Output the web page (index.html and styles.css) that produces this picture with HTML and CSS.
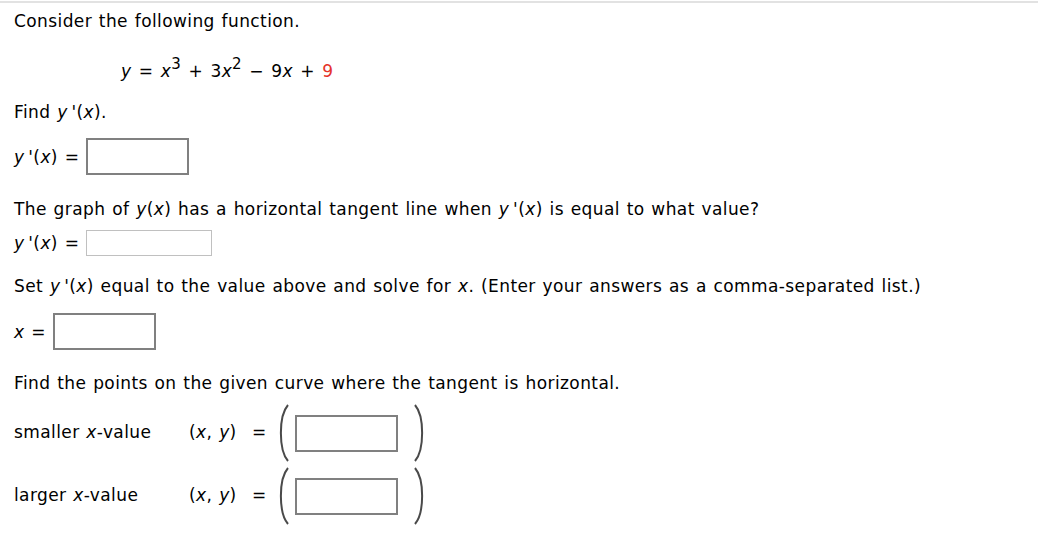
FILE: index.html
```html
<!DOCTYPE html>
<html>
<head>
<meta charset="utf-8">
<link rel="stylesheet" href="styles.css">
</head>
<body>
<div class="rule"></div>
<div class="page">
  <p class="line l-intro">Consider the following function.</p>
  <p class="line eq"><i>y</i> = <i>x</i><sup>3</sup> + 3<i>x</i><sup>2</sup> &minus; 9<i>x</i> + <span class="red">9</span></p>
  <p class="line l-find">Find <i>y</i>&thinsp;'(<i>x</i>).</p>
  <div class="row row-big r1">
    <span class="lbl"><i>y</i>&thinsp;'(<i>x</i>) =</span>
    <span class="box box-dark"></span>
  </div>
  <p class="line l-graph">The graph of <i>y</i>(<i>x</i>) has a horizontal tangent line when <i>y</i>&thinsp;'(<i>x</i>) is equal to what value?</p>
  <div class="row row-small">
    <span class="lbl"><i>y</i>&thinsp;'(<i>x</i>) =</span>
    <span class="box box-light"></span>
  </div>
  <p class="line l-set">Set <i>y</i>&thinsp;'(<i>x</i>) equal to the value above and solve for <i>x</i>. (Enter your answers as a comma-separated list.)</p>
  <div class="row row-big r3">
    <span class="lbl lbl-x"><i>x</i> =</span>
    <span class="box box-dark"></span>
  </div>
  <p class="line l-points">Find the points on the given curve where the tangent is horizontal.</p>
  <div class="pt-row pr1">
    <span class="pt-lbl">smaller <i>x</i>-value</span>
    <span class="pt-xy">(<i>x</i>, <i>y</i>)</span>
    <span class="pt-eq">=</span>
    <svg class="paren" width="14" height="58" viewBox="0 0 14 58"><path d="M12 1 C2.5 12 2.5 46 12 57" fill="none" stroke="#4a4a4a" stroke-width="2"/></svg>
    <span class="box box-dark"></span>
    <svg class="paren" width="14" height="58" viewBox="0 0 14 58"><path d="M2 1 C11.5 12 11.5 46 2 57" fill="none" stroke="#4a4a4a" stroke-width="2"/></svg>
  </div>
  <div class="pt-row pr2">
    <span class="pt-lbl">larger <i>x</i>-value</span>
    <span class="pt-xy">(<i>x</i>, <i>y</i>)</span>
    <span class="pt-eq">=</span>
    <svg class="paren" width="14" height="58" viewBox="0 0 14 58"><path d="M12 1 C2.5 12 2.5 46 12 57" fill="none" stroke="#4a4a4a" stroke-width="2"/></svg>
    <span class="box box-dark"></span>
    <svg class="paren" width="14" height="58" viewBox="0 0 14 58"><path d="M2 1 C11.5 12 11.5 46 2 57" fill="none" stroke="#4a4a4a" stroke-width="2"/></svg>
  </div>
</div>
</body>
</html>
```

FILE: styles.css
```css
html, body {
  margin: 0;
  padding: 0;
  background: #fff;
}
body {
  font-family: "DejaVu Sans", Verdana, sans-serif;
  font-size: 17px;
  letter-spacing: 0.4px;
  word-spacing: 1px;
  color: #000;
}
.rule {
  margin-top: 1px;
  height: 2px;
  background: #e2e2e2;
}
.page {
  padding-left: 14px;
}
.line {
  margin: 0;
  height: 20px;
  line-height: 20px;
  white-space: nowrap;
}
sup {
  font-size: 15px;
  line-height: 0;
  vertical-align: 8px;
}
.red {
  color: #e5332a;
}
.l-intro { margin-top: 8px; }
.eq { margin-top: 30px; padding-left: 107px; word-spacing: 1.5px; }
.l-find { margin-top: 21px; }
.row {
  display: flex;
  align-items: center;
  gap: 7px;
}
.r1 { margin-top: 16px; }
.row-small { margin-top: 11px; }
.r3 { margin-top: 17px; }
.box {
  display: block;
  box-sizing: border-box;
  background: #fff;
}
.box-dark {
  width: 103px;
  height: 37px;
  border: 2px solid #808080;
}
.box-light {
  width: 126px;
  height: 26px;
  border: 1px solid #c0c0c0;
}
.l-graph { margin-top: 24px; }
.l-set { margin-top: 20px; }
.l-points { margin-top: 23px; }
.pt-row {
  display: flex;
  align-items: center;
  height: 58px;
}
.pr1 { margin-top: 11px; }
.pr2 { margin-top: 5px; }
.pt-lbl, .pt-xy, .pt-eq { margin-top: -3px; }
.pt-lbl { width: 175px; }
.pt-xy { width: 63px; }
.pt-eq { width: 24px; }
.paren { display: block; }
.pr1 .box, .pr2 .box { margin: 0 15px 0 5px; }
```
